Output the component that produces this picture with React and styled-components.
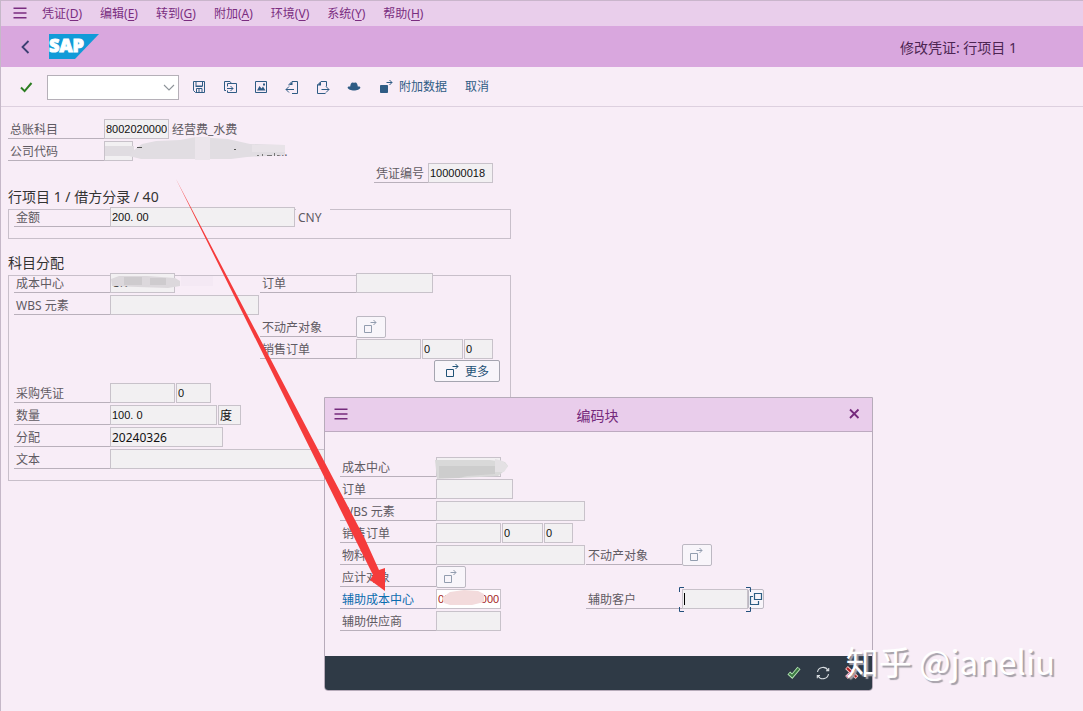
import styled, { createGlobalStyle, css } from 'styled-components'



const menus = [
    ['凭证', 'D'],
    ['编辑', 'E'],
    ['转到', 'G'],
    ['附加', 'A'],
    ['环境', 'V'],
    ['系统', 'Y'],
    ['帮助', 'H'],
]

const tools = [
    { name: '保存', icon: <SaveIcon /> },
    { name: '复制', icon: <CopyIcon /> },
    { name: '图像', icon: <ImageIcon /> },
    { name: '上一项', icon: <PrevPageIcon /> },
    { name: '下一项', icon: <NextPageIcon /> },
    { name: '抬头', icon: <HatIcon /> },
]

export default function App() {
    return (
        <Page>
            <GlobalStyle />
            <MenuBar>
                <IconBtn aria-label="菜单"><BurgerIcon /></IconBtn>
                {menus.map(([text, key]) => (
                    <MenuItem key={key}>{text}(<u>{key}</u>)</MenuItem>
                ))}
            </MenuBar>
            <TitleBar>
                <IconBtn aria-label="返回"><BackIcon /></IconBtn>
                <SapLogo />
                <Title>修改凭证: 行项目 1</Title>
            </TitleBar>
            <ToolBar>
                <IconBtn aria-label="确认"><CheckIcon /></IconBtn>
                <Command>
                    <input aria-label="命令" />
                    <IconBtn aria-label="展开"><ChevronIcon /></IconBtn>
                </Command>
                <Tools>
                    {tools.map((t) => (
                        <IconBtn key={t.name} aria-label={t.name}>{t.icon}</IconBtn>
                    ))}
                </Tools>
                <TextBtn><JumpIcon filled />附加数据</TextBtn>
                <TextBtn>取消</TextBtn>
            </ToolBar>

            <Content>
                <Row>
                    <Field id="gl" label="总账科目" value="8002020000" w={65} />
                    <Note>经营费_水费</Note>
                </Row>
                <Row>
                    <Field id="company" label="公司代码" w={29} />
                    <Dots>…</Dots>
                </Row>
                <Row $end>
                    <Field id="docno" label="凭证编号" value="100000018" w={65} lw={54} />
                </Row>

                <Heading>行项目 1 / 借方分录 / 40</Heading>
                <Group>
                    <Row>
                        <Field id="amount" label="金额" value="200. 00" w={185} />
                        <Note $mask>CNY</Note>
                    </Row>
                </Group>

                <Heading>科目分配</Heading>
                <Group $tall>
                    <Row>
                        <Half><Field id="cc" label="成本中心" value="CN" w={65} /></Half>
                        <Field id="order" label="订单" w={77} />
                    </Row>
                    <Row><Field id="wbs" label="WBS 元素" w={149} /></Row>
                    <Row>
                        <Half />
                        <Label as="span">不动产对象</Label>
                        <JumpBtn aria-label="不动产对象"><JumpIcon /></JumpBtn>
                    </Row>
                    <Row>
                        <Half />
                        <Field id="so" label="销售订单" w={65} />
                        <Input aria-label="销售订单项目" defaultValue="0" $w={41} />
                        <Input aria-label="计划行" defaultValue="0" $w={29} />
                    </Row>
                    <Row $more>
                        <MoreBtn><JumpIcon />更多</MoreBtn>
                    </Row>
                    <Row>
                        <Field id="po" label="采购凭证" w={65} />
                        <Input aria-label="采购凭证项目" defaultValue="0" $w={35} />
                    </Row>
                    <Row>
                        <Field id="qty" label="数量" value="100. 0" w={107} />
                        <Input aria-label="单位" defaultValue="度" $w={23} $big />
                    </Row>
                    <Row><Field id="assign" label="分配" value="20240326" w={113} big /></Row>
                    <Row><Field id="text" label="文本" w={385} /></Row>
                </Group>
            </Content>

            <CodingBlock />
            <Marks />
            <Watermark>知乎 @janeliu</Watermark>
        </Page>
    )
}

function Field({ id, label, value = '', w, lw, big, active }) {
    return (
        <>
            <Label htmlFor={id} $w={lw} $active={active}>{label}</Label>
            <Input id={id} defaultValue={value} $w={w} $big={big} $active={active} />
        </>
    )
}

function CodingBlock() {
    return (
        <Dialog role="dialog" aria-label="编码块">
            <DialogHead>
                <IconBtn aria-label="菜单"><BurgerIcon /></IconBtn>
                <h2>编码块</h2>
                <IconBtn aria-label="关闭"><CloseIcon /></IconBtn>
            </DialogHead>
            <DialogBody>
                <Row><Field id="d-cc" label="成本中心" w={65} /></Row>
                <Row><Field id="d-order" label="订单" w={77} /></Row>
                <Row><Field id="d-wbs" label="WBS 元素" w={149} /></Row>
                <Row>
                    <Field id="d-so" label="销售订单" w={65} />
                    <Input aria-label="销售订单项目" defaultValue="0" $w={41} />
                    <Input aria-label="计划行" defaultValue="0" $w={29} />
                </Row>
                <Row>
                    <Half><Field id="d-mat" label="物料" w={149} /></Half>
                    <Label as="span">不动产对象</Label>
                    <JumpBtn aria-label="不动产对象"><JumpIcon /></JumpBtn>
                </Row>
                <Row>
                    <Label as="span">应计对象</Label>
                    <JumpBtn aria-label="应计对象"><JumpIcon /></JumpBtn>
                </Row>
                <Row>
                    <Half><Field id="d-aux" label="辅助成本中心" value="0000000000" w={65} active /></Half>
                    <Label htmlFor="d-cust">辅助客户</Label>
                    <Focus>
                        <Input id="d-cust" $w={66} />
                        <Caret />
                        <Bracket viewBox="0 0 72 25" width="72" height="25" />
                    </Focus>
                    <HelpBtn aria-label="搜索帮助"><HelpIcon /></HelpBtn>
                </Row>
                <Row><Field id="d-vendor" label="辅助供应商" w={65} /></Row>
            </DialogBody>
            <DialogFoot>
                <IconBtn aria-label="确认"><OkIcon /></IconBtn>
                <IconBtn aria-label="刷新"><RefreshIcon /></IconBtn>
                <IconBtn aria-label="取消"><CancelIcon /></IconBtn>
            </DialogFoot>
        </Dialog>
    )
}

// corners around the field that has the focus
function Bracket(props) {
    return (
        <BracketSvg {...props}>
            <path d="M5 .5H.5V5M67 .5h4.5V5M5 24.5H.5V20M67 24.5h4.5V20" />
        </BracketSvg>
    )
}

// smudged values and the red arrow, drawn over the whole page
function Marks() {
    return (
        <MarksSvg width="900" height="711" viewBox="0 0 900 711" aria-hidden="true">
            <path fill="#e0dce1" d="M105 146h29v10h-29z" />
            <path fill="#e1dde2" d="M134 150l8-6 14-3 24-1 16-3 32 2 22 5 35 1 0 10-18 1-20 1-16 2-90 0-12-3z" />
            <path fill="#ebe5eb" d="M195 137h15v23h-15z" />
            <path fill="#e8e3e8" d="M252 145h33v7h-33z" />
            <path fill="#555" d="M137 147h5v1h-5zM234 149h2v1h-2z" />
            <path fill="#777" d="M257 155h2v1h-2zM262 154h1v2h-1zM267 155h5v1h-5zM274 153h1v3h-1zM277 155h2v1h-2z" />

            <path fill="#dcd8dc" d="M111 279l8-3 28 0 28 2 5 3 0 5-12 2-30-1-26-1z" />
            <path fill="#cecbce" d="M124 277h18v8h-18zM150 278h16v7h-16z" />
            <path fill="#f4e9f4" d="M181 276h32v10h-32z" />

            <path fill="#d9d9d9" d="M435 460h55l15 2 3 4-5 6-5 4-37 2-24 1z" />
            <path fill="#cdcdcd" d="M439 466h56v8l-28 2-8 2h-20z" />
            <path fill="#e4e1e4" d="M495 459l8 2 5 5-4 6h-9z" />

            <path fill="#f3dbdc" d="M442 598l8-6 14-2 14 1 6 3 0 8-12 3-12 0-10 0-6-2z" />

            <path fill="#f53b3b" d="M176 179L365 539 379 570 385 568 385 591 370 580 373 575 356 541Z" />
        </MarksSvg>
    )
}

function BurgerIcon() {
    return (
        <Icon>
            <path stroke="currentColor" strokeWidth="1.6" d="M1.5 3.2h13M1.5 8h13M1.5 12.8h13" />
        </Icon>
    )
}

function BackIcon() {
    return <Icon><path stroke="#3b3f72" strokeWidth="1.8" d="M10.500 2L4.500 8l6 6" /></Icon>
}

function CheckIcon() {
    return <Icon><path stroke="#2c7d22" strokeWidth="2" d="M3 8.5l3.6 3.6L13.5 4" /></Icon>
}

function ChevronIcon() {
    return <Icon><path stroke="#8d9399" strokeWidth="1.1" d="M3 6L8 11l5-5" /></Icon>
}

function SaveIcon() {
    return (
        <Icon>
            <path stroke="currentColor" d="M2.500 2.500h11v11h-9l-2-2zM5 2.500v4.500h6.500V2.500M5.500 13.500v-4h5.500v4M8 10v3M4.500 7.500h7" />
        </Icon>
    )
}

function CopyIcon() {
    return (
        <Icon>
            <path stroke="currentColor" d="M4 11.500H2.500v-9h5.500l1.500 2M5.500 7.500v-3h9v9h-9v-2M5 9.500h6M8.500 7L11 9.500 8.500 12" />
        </Icon>
    )
}

function ImageIcon() {
    return (
        <Icon>
            <path stroke="currentColor" d="M2.500 2.500h11v11h-11z" />
            <path fill="currentColor" d="M4 11.500L6.500 7l2 2.500L10 7.500l2.500 4zM10 4.500h2v2h-2z" />
        </Icon>
    )
}

function PrevPageIcon() {
    return (
        <Icon>
            <path stroke="currentColor" d="M5 6.500V5.500L8 2.500h5.500v12H8M10 10.500H2M5 7.500l-3 3 3 3" />
            <path fill="currentColor" d="M5 6L8.500 2.500V6z" />
        </Icon>
    )
}

function NextPageIcon() {
    return (
        <Icon>
            <path stroke="currentColor" d="M2.500 6l3.500-3.500h5.500v5M2.500 5.500v9h8M6.500 10.500h7.500M11 7.500l3 3-3 3" />
            <path fill="currentColor" d="M2.500 6.500L6 2.500v4z" />
        </Icon>
    )
}

function HatIcon() {
    return (
        <Icon>
            <path fill="currentColor" d="M4.200 7.500C4.500 4.500 5.800 3 7 3.500q1 .5 2 0c1.500-.5 2.600 1.500 2.800 4 1.500-.3 2.600.2 2.600 1C14 10.500 11 11.500 8 11.500S2 10.500 1.600 8.500c0-.8 1.100-1.300 2.600-1z" />
        </Icon>
    )
}

function JumpIcon({ filled }) {
    return (
        <Icon>
            <path stroke="currentColor" fill={filled ? 'currentColor' : 'none'} d="M1.500 6.500h7v7h-7z" />
            <path stroke="currentColor" d="M7.500 3.500h5.500M10.500 1l2.500 2.500L10.500 6" />
        </Icon>
    )
}

function HelpIcon() {
    return (
        <Icon>
            <path stroke="currentColor" strokeWidth="1.200" d="M6.500 2.500h7v6h-7zM5 5.500H2.500v8h8V10" />
        </Icon>
    )
}

function CloseIcon() {
    return <Icon><path stroke="currentColor" strokeWidth="1.800" d="M4 3.500l8.500 8.500M12.500 3.500L4 12" /></Icon>
}

function OkIcon() {
    return (
        <Icon>
            <path stroke="#b5e3b5" strokeWidth="4" d="M2.800 8l3.400 3.200L13 3" />
            <path stroke="#3c7a42" strokeWidth="2" d="M3.300 8.400l2.900 2.600L12.600 3.500" />
        </Icon>
    )
}

function RefreshIcon() {
    return (
        <Icon>
            <path stroke="#d5dade" strokeWidth="1.100" d="M2.500 7a5.600 5.600 0 0 1 10.500-1.500M13.500 9A5.600 5.600 0 0 1 3 10.700M13.700 3v2.800h-2.700M2.300 13.200v-2.700h2.700" />
        </Icon>
    )
}

function CancelIcon() {
    return (
        <Icon>
            <path stroke="#f5c8c8" strokeWidth="4" d="M2.500 2.500l10.500 10M13 2.500L2.500 12.500" />
            <path stroke="#b32222" strokeWidth="2" d="M3 3l9.500 9M12.500 3L3 12" />
        </Icon>
    )
}

function SapLogo() {
    return (
        <Logo width="50" height="25" viewBox="0 0 50 25" role="img" aria-label="SAP">
            <path fill="#119bd8" d="M0 0h50L26 25H0z" />
            <text x="0" y="18">SAP</text>
        </Logo>
    )
}




const GlobalStyle = createGlobalStyle`
    * {
        box-sizing: border-box;
    }

    body {
        margin: 0;
        background-color: #f8edf7;
        font-family: "Noto Sans", "Noto Sans CJK SC", sans-serif;
        font-size: 12px;
        color: #5f5a62;
    }

    button, input {
        font-family: inherit;
        font-size: inherit;
        color: inherit;
    }
`

const Page = styled.div`
    position: relative;
    min-height: 100vh;
    border-left: 1px solid #c5b8c8;
    overflow: hidden;
`

const Icon = styled.svg.attrs({ viewBox: '0 0 16 16', width: 16, height: 16, fill: 'none' })`
    display: block;
    flex: none;
`

const IconBtn = styled.button`
    display: flex;
    padding: 0;
    border: 0;
    background: none;
    cursor: pointer;
`

const MenuBar = styled.nav`
    display: flex;
    align-items: center;
    gap: 18px;
    height: 26px;
    padding-left: 11px;
    border-top: 1px solid #c9b5cb;
    background-color: #e9ceeb;
    color: #7a2d80;

    ${IconBtn} {
        margin: -2px -4px 0 0;
    }
`

const MenuItem = styled.button`
    padding: 0;
    border: 0;
    background: none;
    line-height: 18px;
    white-space: nowrap;

    u {
        text-underline-offset: 2px;
    }
`

const TitleBar = styled.header`
    display: flex;
    align-items: center;
    height: 41px;
    padding: 0 66px 0 17px;
    background-color: #d9a7de;

    ${IconBtn} {
        margin-right: 15px;
    }
`

const Logo = styled.svg`
    align-self: flex-start;
    margin-top: 8px;

    text {
        font-family: "Open Sans", "Noto Sans", sans-serif;
        font-size: 18px;
        font-weight: 800;
        fill: #fff;
        stroke: #fff;
        stroke-width: 1px;
    }
`

const Title = styled.h1`
    margin: 0 0 0 auto;
    font-size: 14px;
    font-weight: 400;
    color: #4d2552;
`

const ToolBar = styled.div`
    display: flex;
    align-items: center;
    height: 40px;
    padding-left: 17px;
    border-bottom: 1px solid #ddd0df;
    color: #2f5c85;
`

const Command = styled.div`
    display: flex;
    align-items: center;
    width: 132px;
    height: 25px;
    margin: 1px 0 0 13px;
    padding-right: 1px;
    border: 1px solid #b5b0b8;
    background-color: #fff;

    input {
        flex: 1;
        min-width: 0;
        border: 0;
        outline: 0;
        background: none;
    }
`

const Tools = styled.div`
    display: flex;
    gap: 15px;
    margin: 0 17px 0 12px;
`

const TextBtn = styled.button`
    display: flex;
    align-items: center;
    gap: 4px;
    margin-right: 18px;
    padding: 0;
    border: 0;
    background: none;
    line-height: 18px;
`

const Content = styled.main`
    max-width: 510px;
    padding: 12px 0 0 7px;
`

const Row = styled.div`
    display: flex;
    align-items: flex-start;
    gap: 1px;
    height: 22px;

    ${(props) => props.$end && css`
        justify-content: flex-end;
        padding-right: 18px;
    `}

    ${(props) => props.$more && css`
        justify-content: flex-end;
        padding-right: 10px;
    `}
`

const Label = styled.label`
    flex: none;
    width: ${(props) => props.$w || 96}px;
    height: 20px;
    margin-right: -1px;
    padding-left: 2px;
    border-bottom: 1px solid ${(props) => (props.$active ? '#a8a3b8' : '#b9b0bb')};
    line-height: 22px;
    white-space: nowrap;
    color: ${(props) => (props.$active ? '#0b6cae' : 'inherit')};
`

const Input = styled.input`
    flex: none;
    width: ${(props) => props.$w}px;
    height: 20px;
    padding: 0 1px;
    border: 1px solid #c8c2ca;
    border-radius: 0;
    outline: 0;
    background-color: ${(props) => (props.$active ? '#fff' : '#f2f0f2')};
    font-family: ${(props) => (props.$big ? 'inherit' : '"Liberation Sans", sans-serif')};
    font-size: ${(props) => (props.$big ? 12 : 11)}px;
    color: ${(props) => (props.$active ? '#a51d24' : '#111')};
`

const Half = styled.div`
    display: flex;
    flex: none;
    gap: 1px;
    width: 245px;
`

const Note = styled.span`
    height: 20px;
    padding: 0 8px 0 2px;
    line-height: 22px;
    white-space: nowrap;
    background-color: ${(props) => (props.$mask ? '#f8edf7' : 'transparent')};
`

const Dots = styled.span`
    margin-left: 144px;
    line-height: 22px;
`

const Heading = styled.h2`
    margin: 0;
    padding-top: 2px;
    font-size: 14px;
    font-weight: 400;
    line-height: 20px;
    color: #333;
`

const Group = styled.section`
    max-width: 503px;
    height: 30px;
    margin: 2px 0 12px;
    padding-left: 5px;
    border: 1px solid #c8bfca;

    ${(props) => props.$tall && css`
        height: auto;
        padding-bottom: 9px;
    `}

    & > ${Row}:first-child {
        margin-top: -3px;
    }
`

const JumpBtn = styled.button`
    display: flex;
    align-items: center;
    justify-content: center;
    width: 30px;
    height: 22px;
    margin-top: -1px;
    padding: 0;
    border: 1px solid #bcb8c2;
    border-radius: 2px;
    background-color: #f8f5fa;
    color: #929daf;
`

const MoreBtn = styled(JumpBtn)`
    gap: 4px;
    width: 66px;
    border-color: #a5a5b0;
    color: #1f5276;
`

const HelpBtn = styled(JumpBtn)`
    width: 16px;
    height: 20px;
    margin: 0 0 0 -1px;
    color: #2d5d83;
`

const Dialog = styled.div`
    position: absolute;
    left: 323px;
    top: 397px;
    width: 549px;
    border: 1px solid #b7abba;
    border-radius: 0 0 4px 4px;
    background-color: #f8edf7;
    overflow: hidden;
`

const DialogHead = styled.div`
    display: flex;
    align-items: center;
    justify-content: space-between;
    height: 34px;
    padding: 0 10px 1px 8px;
    border-bottom: 1px solid #bdaac0;
    background-color: #e9cdeb;
    color: #752a7c;

    h2 {
        margin: 2px 0 0;
        font-size: 14px;
        font-weight: 400;
    }
`

const DialogBody = styled.div`
    padding: 25px 15px 23px;
`

const DialogFoot = styled.div`
    display: flex;
    align-items: center;
    justify-content: flex-end;
    gap: 13px;
    height: 34px;
    padding-right: 12px;
    background-color: #2f3a46;
`

const Focus = styled.div`
    position: relative;
    display: flex;
`

const Caret = styled.span`
    position: absolute;
    left: 2px;
    top: 4px;
    width: 1px;
    height: 12px;
    background-color: #000;
`

const BracketSvg = styled.svg`
    position: absolute;
    left: -3px;
    top: -2px;
    z-index: 1;
    fill: none;
    stroke: #23507c;
    pointer-events: none;
`

const MarksSvg = styled.svg`
    position: absolute;
    left: -1px;
    top: 0;
    pointer-events: none;
`

const Watermark = styled.div`
    position: absolute;
    right: 28px;
    bottom: 30px;
    font-family: "Noto Sans CJK SC", sans-serif;
    font-size: 33px;
    line-height: 40px;
    color: #fff;
    text-shadow: 2px 2px 1px #a5a0a8;
    pointer-events: none;
`
